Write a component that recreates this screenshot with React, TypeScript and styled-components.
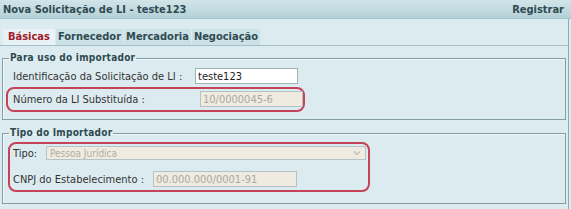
import styled, { createGlobalStyle } from "styled-components";

const Global = createGlobalStyle`
  body {
    margin: 0;
    background: #dcebef;
    font-family: "DejaVu Sans Condensed", "DejaVu Sans", sans-serif;
  }
`;

const Window = styled.div`
  width: 571px;
  height: 209px;
  overflow: hidden;
  background: #dcebef;
`;

const Header = styled.div`
  height: 18px;
  display: flex;
  align-items: center;
  justify-content: space-between;
  padding: 0 7px 0 3px;
  background: linear-gradient(#d2e5e9, #b4d1d7);
  border-bottom: 1px solid #a3c2c8;
  color: #2f4b51;
  font-size: 11px;
  font-weight: bold;
`;

const Panel = styled.div`
  width: 568px;
  border-right: 1px solid #8eadb2;
  padding-bottom: 6px;
`;

const TabBar = styled.div`
  display: flex;
  gap: 1px;
  padding: 10px 0 0 3px;
  border-bottom: 1px solid #a2c0c5;
`;

const Tab = styled.div<{ $active?: boolean }>`
  height: 16px;
  line-height: 16px;
  padding: 0 ${(p) => (p.$active ? 5 : 2)}px;
  font-size: 11px;
  font-weight: bold;
  color: ${(p) => (p.$active ? "#a11a2b" : "#2f4b51")};
  background: ${(p) => (p.$active ? "#e9f3f5" : "#cce1e6")};
`;

const Group = styled.fieldset<{ $gap?: number; $pb?: number }>`
  margin: ${(p) => p.$gap ?? 6}px 2px 0 2px;
  padding: 2px 0 ${(p) => p.$pb ?? 7}px 0;
  border: 1px solid #819fa4;
  box-shadow: inset 1px 1px 0 #eef6f8;
  min-width: 0;
`;

const Legend = styled.legend`
  margin-left: 6px;
  padding: 0 1px;
  font-size: 10px;
  line-height: 12px;
  font-weight: bold;
  letter-spacing: 0.25px;
  color: #2c4a50;
`;

const Row = styled.div<{ $h?: number; $pad?: number }>`
  display: flex;
  align-items: center;
  height: ${(p) => p.$h ?? 20}px;
  padding-left: ${(p) => p.$pad ?? 10}px;
`;

const Label = styled.span<{ $w: number }>`
  width: ${(p) => p.$w}px;
  flex: none;
  font-size: 11px;
  color: #333;
  white-space: nowrap;
`;

const Highlight = styled.div<{ $w: number; $left: number; $py: string }>`
  width: ${(p) => p.$w}px;
  margin: 1px 0 0 ${(p) => p.$left}px;
  padding: ${(p) => p.$py};
  border: 2px solid #c64258;
  border-radius: 8px;
  box-sizing: border-box;
  display: flex;
  flex-direction: column;
  gap: 11px;
`;

const Input = styled.input<{ $w: number }>`
  width: ${(p) => p.$w}px;
  height: 16px;
  box-sizing: border-box;
  margin: 0;
  padding: 0 2px;
  border: 1px solid #9fb3b7;
  background: #fff;
  font-family: "DejaVu Sans Condensed", "DejaVu Sans", sans-serif;
  font-size: 11px;
  color: #222;
  outline: none;

  &:disabled {
    background: #efebe0;
    color: #a9a9a0;
    border-color: #b4c2c4;
  }
`;

const Select = styled.div`
  width: 320px;
  height: 14px;
  box-sizing: border-box;
  border: 1px solid #b7c4c6;
  background: #efebe0;
  display: flex;
  align-items: center;
  justify-content: space-between;
  padding: 0 4px 0 3px;
  font-size: 10px;
  color: #b3ada0;
`;

export default function App() {
  return (
    <Window>
      <Global />
      <Header>
        <span>Nova Solicitação de LI - teste123</span>
        <span>Registrar</span>
      </Header>
      <Panel>
        <TabBar>
          <Tab $active>Básicas</Tab>
          <Tab>Fornecedor</Tab>
          <Tab>Mercadoria</Tab>
          <Tab>Negociação</Tab>
        </TabBar>

        <Group>
          <Legend>Para uso do importador</Legend>
          <Row>
            <Label $w={182}>Identificação da Solicitação de LI :</Label>
            <Input $w={103} defaultValue="teste123" />
          </Row>
          <Highlight $w={299} $left={3} $py="2px 0 3px 5px">
            <Row $h={16} $pad={0}>
              <Label $w={187}>Número da LI Substituída :</Label>
              <Input $w={103} value="10/0000045-6" disabled readOnly />
            </Row>
          </Highlight>
        </Group>

        <Group $gap={7} $pb={11}>
          <Legend>Tipo do Importador</Legend>
          <Highlight $w={362} $left={5} $py="2px 0 3px 3px">
            <Row $h={14} $pad={0}>
              <Label $w={33}>Tipo:</Label>
              <Select>
                <span>Pessoa Jurídica</span>
                <svg width="8" height="6" viewBox="0 0 8 6">
                  <path d="M1 1.5 L4 4.5 L7 1.5" fill="none" stroke="#c2c2b8" strokeWidth="1.3" />
                </svg>
              </Select>
            </Row>
            <Row $h={16} $pad={0}>
              <Label $w={140}>CNPJ do Estabelecimento :</Label>
              <Input $w={144} value="00.000.000/0001-91" disabled readOnly />
            </Row>
          </Highlight>
        </Group>
      </Panel>
    </Window>
  );
}
